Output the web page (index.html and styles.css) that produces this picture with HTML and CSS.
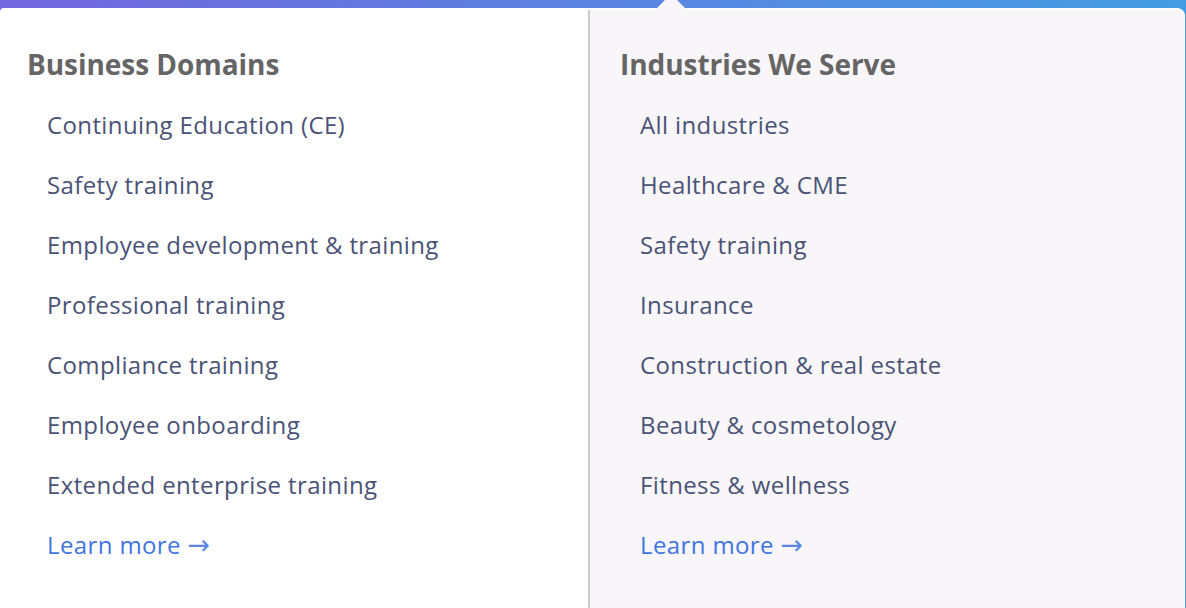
FILE: index.html
```html
<!DOCTYPE html>
<html lang="en">
<head>
<meta charset="utf-8">
<title>Menu</title>
<link rel="stylesheet" href="styles.css">
</head>
<body>
<div class="page">
  <div class="panel">
    <span class="notch"></span>
    <section class="col col-left">
      <h2 class="col-title">Business Domains</h2>
      <ul class="links">
        <li><a class="item" href="#">Continuing Education (CE)</a></li>
        <li><a class="item" href="#">Safety training</a></li>
        <li><a class="item" href="#">Employee development &amp; training</a></li>
        <li><a class="item" href="#">Professional training</a></li>
        <li><a class="item" href="#">Compliance training</a></li>
        <li><a class="item" href="#">Employee onboarding</a></li>
        <li><a class="item" href="#">Extended enterprise training</a></li>
        <li><a class="more" href="#">Learn more <span class="arrow">→</span></a></li>
      </ul>
    </section>
    <section class="col col-right">
      <h2 class="col-title">Industries We Serve</h2>
      <ul class="links">
        <li><a class="item" href="#">All industries</a></li>
        <li><a class="item" href="#">Healthcare &amp; CME</a></li>
        <li><a class="item" href="#">Safety training</a></li>
        <li><a class="item" href="#">Insurance</a></li>
        <li><a class="item" href="#">Construction &amp; real estate</a></li>
        <li><a class="item" href="#">Beauty &amp; cosmetology</a></li>
        <li><a class="item" href="#">Fitness &amp; wellness</a></li>
        <li><a class="more" href="#">Learn more <span class="arrow">→</span></a></li>
      </ul>
    </section>
  </div>
</div>
</body>
</html>
```

FILE: styles.css
```css
* { box-sizing: border-box; }
html, body { margin: 0; padding: 0; }
body {
  font-family: "Open Sans", "Noto Sans", sans-serif;
  background: #ffffff;
}
.page {
  height: 608px;
  padding-top: 8px;
  display: flex;
  flex-direction: column;
  background: linear-gradient(90deg, #7466de 0%, #5b83e0 50%, #449de2 100%);
  overflow: hidden;
}
.panel {
  position: relative;
  flex: 1;
  display: grid;
  grid-template-columns: 588px 1fr;
  background: #ffffff;
  border-radius: 4px 8px 0 0;
  margin-right: 1px;
}
.notch {
  position: absolute;
  top: -14px;
  left: 655px;
  width: 32px;
  height: 16px;
  background: #f8f6f8;
  clip-path: polygon(50% 0, 100% 100%, 0 100%);
}
.col {
  padding-top: 36px;
}
.col-left {
  padding-left: 27px;
}
.col-right {
  margin-top: 2px;
  padding-top: 34px;
  padding-left: 30px;
  background: #f8f6f8;
  border-left: 2px solid #cbcbcb;
  border-top-right-radius: 8px;
}
.col-title {
  margin: 0 0 26px;
  font-size: 28px;
  line-height: 40px;
  font-weight: 700;
  color: #656565;
  letter-spacing: -0.05px;
}
.links {
  list-style: none;
  margin: 0;
  padding: 0 0 0 20px;
  display: flex;
  flex-direction: column;
  gap: 30px;
}
.links li {
  line-height: 30px;
  font-size: 24px;
  letter-spacing: 0.38px;
}
.item {
  color: #4a5377;
  text-decoration: none;
}
.more {
  color: #3f75e0;
  text-decoration: none;
}
.arrow {
  font-family: "DejaVu Sans", sans-serif;
  font-size: 27px;
  color: #5b86e4;
  letter-spacing: 0;
}
```
